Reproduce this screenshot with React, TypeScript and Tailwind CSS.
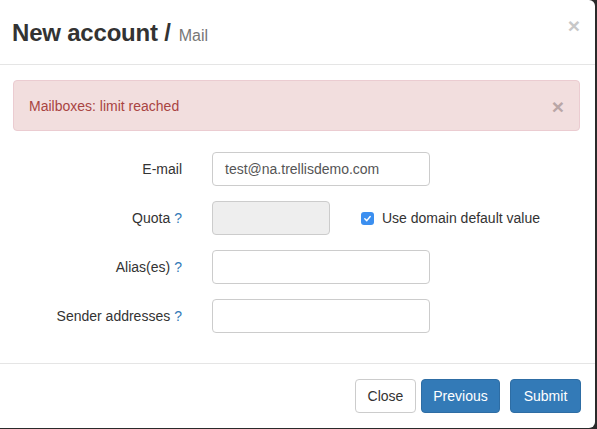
import React from "react";

function Help() {
  return <span className="text-[#337ab7] ml-[4px]">?</span>;
}

function Row({ label, help, children }: { label: string; help?: boolean; children: React.ReactNode }) {
  return (
    <div className="flex items-center h-[34px]">
      <div className="w-[182px] text-right text-[14px] text-[#333] pt-[1px]">
        {label}
        {help && <Help />}
      </div>
      <div className="ml-[30px] flex items-center">{children}</div>
    </div>
  );
}

export default function App() {
  return (
    <div className="w-[597px] h-[429px] bg-[#2a2a2a] overflow-hidden font-['Liberation_Sans',Arial,sans-serif]">
      <div className="w-[595px] h-[428px] bg-white rounded-r-[6px] flex flex-col">
        <div className="h-[65px] border-b border-[#e5e5e5] flex items-center justify-between pl-[12px] pr-[15px] shrink-0">
          <div className="flex items-baseline text-[#333] pt-[2px]">
            <span className="text-[24px] font-bold tracking-[-0.2px]">New account /</span>
            <span className="text-[16px] text-[#777] ml-[8px]">Mail</span>
          </div>
          <span className="text-[21px] font-bold text-[#c8c8c8] leading-none -mt-[14px]">×</span>
        </div>
        <div className="pt-[15px] pl-[13px] pr-[15px] pb-[30px] flex flex-col">
          <div className="h-[51px] bg-[#f2dede] border border-[#ebccd1] rounded-[4px] flex items-center justify-between pl-[15px] pr-[15px] text-[14px] text-[#a94442]">
            <span className="pt-[1px]">Mailboxes: limit reached</span>
            <span className="text-[21px] font-bold text-[#b9a6a6] leading-none pt-[2px]">×</span>
          </div>
          <div className="mt-[21px] -ml-[13px] flex flex-col gap-[15px]">
            <Row label="E-mail">
              <div className="w-[218px] h-[34px] border border-[#ccc] rounded-[4px] flex items-center px-[12px] pt-[1px] text-[14px] text-[#555]">
                test@na.trellisdemo.com
              </div>
            </Row>
            <Row label="Quota" help>
              <div className="w-[118px] h-[34px] border border-[#ccc] rounded-[4px] bg-[#eee]" />
              <div className="ml-[31px] flex items-center">
                <div className="w-[13px] h-[13px] rounded-[3px] bg-[#3b8ff0] flex items-center justify-center">
                  <svg width="9" height="9" viewBox="0 0 10 10">
                    <path d="M2 5.2 L4.2 7.4 L8 2.8" stroke="white" strokeWidth="1.6" fill="none" strokeLinecap="round" strokeLinejoin="round" />
                  </svg>
                </div>
                <span className="ml-[8px] text-[14px] text-[#333] pt-[1px]">Use domain default value</span>
              </div>
            </Row>
            <Row label="Alias(es)" help>
              <div className="w-[218px] h-[34px] border border-[#ccc] rounded-[4px]" />
            </Row>
            <Row label="Sender addresses" help>
              <div className="w-[218px] h-[34px] border border-[#ccc] rounded-[4px]" />
            </Row>
          </div>
        </div>
        <div className="border-t border-[#e5e5e5] pt-[15px] pr-[14px] flex justify-end">
          <button className="h-[34px] w-[61px] border border-[#ccc] rounded-[4px] bg-white text-[14px] text-[#333]">Close</button>
          <button className="ml-[5px] h-[34px] w-[79px] border border-[#2e6da4] rounded-[4px] bg-[#337ab7] text-[14px] text-white">Previous</button>
          <button className="ml-[10px] h-[34px] w-[71px] border border-[#2e6da4] rounded-[4px] bg-[#337ab7] text-[14px] text-white">Submit</button>
        </div>
      </div>
    </div>
  );
}
